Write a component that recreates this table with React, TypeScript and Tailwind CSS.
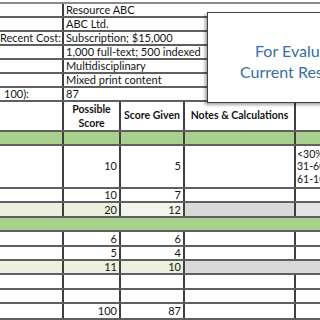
import React from "react";

const H = "border-b-2 border-[#5f5f5f]";
const V = "border-r-2 border-[#3f3f3f]";

function TopRow({ left, right, lpad = "pl-0" }: { left?: string; right?: string; lpad?: string }) {
  return (
    <div className={`grid grid-cols-[64px_1fr] h-[14px] ${H}`}>
      <div className={`${V} ${lpad} leading-[12px] whitespace-nowrap overflow-hidden`}>{left}</div>
      <div className="pl-[2px] leading-[12px] whitespace-nowrap">{right}</div>
    </div>
  );
}

type Cell = { t?: React.ReactNode; bg?: string };

function Row({ h, cells }: { h: string; cells: Cell[] }) {
  return (
    <div className={`grid grid-cols-[64px_57px_64px_111px_1fr] ${h} ${H}`}>
      {cells.map((c, i) => (
        <div
          key={i}
          className={`${i < 4 ? V : ""} ${c.bg ?? ""} pr-[2px] leading-[12px] flex items-center justify-end whitespace-nowrap overflow-hidden`}
        >
          {c.t}
        </div>
      ))}
    </div>
  );
}

export default function App() {
  const lg = "bg-[#ebf1de]";
  const gr = "bg-[#d9d9d9]";
  return (
    <div className="w-[320px] h-[320px] overflow-hidden bg-white relative font-['Lato',sans-serif] text-[11px] text-[#141414]">
      <div className={`h-[4px] border-b-2 border-[#8a8a8a]`} />
      <TopRow right="Resource ABC" />
      <TopRow right="ABC Ltd." />
      <TopRow left="Recent Cost:" lpad="pl-0" right="Subscription; $15,000" />
      <TopRow right="1,000 full-text; 500 indexed" />
      <TopRow right="Multidisciplinary" />
      <TopRow right="Mixed print content" />
      <TopRow left="100):" lpad="pl-[4px]" right="87" />

      {/* header */}
      <div className={`grid grid-cols-[64px_57px_64px_111px_1fr] h-[30px] ${H} font-bold text-[10.5px]`}>
        <div className={V} />
        <div className={`${V} flex flex-col items-center justify-center leading-[14px]`}>
          <span>Possible</span>
          <span>Score</span>
        </div>
        <div className={`${V} flex items-center justify-center whitespace-nowrap`}>Score Given</div>
        <div className={`${V} flex items-center justify-center whitespace-nowrap`}>Notes &amp; Calculations</div>
        <div />
      </div>
      {/* green band with columns */}
      <div className={`grid grid-cols-[64px_57px_64px_111px_1fr] h-[14px] ${H} bg-[#a9d18e]`}>
        <div className={V} />
        <div className={V} />
        <div className={V} />
        <div className={V} />
        <div />
      </div>
      {/* tall row */}
      <div className={`grid grid-cols-[64px_57px_64px_111px_1fr] h-[43px] ${H}`}>
        <div className={V} />
        <div className={`${V} flex items-center justify-end pr-[2px]`}>10</div>
        <div className={`${V} flex items-center justify-end pr-[2px]`}>5</div>
        <div className={V} />
        <div className="flex flex-col justify-center pl-[1px] text-[10.5px] leading-[12.5px] whitespace-nowrap overflow-hidden">
          <span>&lt;30%</span>
          <span>31-60</span>
          <span>61-100</span>
        </div>
      </div>
      <Row h="h-[14px]" cells={[{}, { t: "10" }, { t: "7" }, {}, {}]} />
      <Row h="h-[15px]" cells={[{ bg: lg }, { t: "20", bg: lg }, { t: "12", bg: "bg-[#f2f5ec]" }, { bg: gr }, { bg: "bg-[#e4e4e4]" }]} />
      <div className={`h-[14px] ${H} bg-[#a9d18e]`} />
      <Row h="h-[15px]" cells={[{}, { t: "6" }, { t: "6" }, {}, {}]} />
      <Row h="h-[14px]" cells={[{}, { t: "5" }, { t: "4" }, {}, {}]} />
      <div className={`grid grid-cols-[64px_57px_64px_1fr] h-[14px] ${H}`}>
        <div className={`${V} ${lg}`} />
        <div className={`${V} ${lg} flex items-center justify-end pr-[2px] leading-[12px]`}>11</div>
        <div className={`${V} ${lg} flex items-center justify-end pr-[2px] leading-[12px]`}>10</div>
        <div className={gr} />
      </div>
      <Row h="h-[15px]" cells={[{}, {}, {}, {}, {}]} />
      <Row h="h-[14px]" cells={[{}, {}, {}, {}, {}]} />
      <Row h="h-[16px]" cells={[{}, { t: "100" }, { t: "87" }, {}, {}]} />

      {/* overlay box */}
      <div className="absolute left-[207px] top-[12px] w-[160px] h-[91px] bg-white border-[1.5px] border-[#404040] shadow-[-2px_2px_3px_rgba(0,0,0,0.35)] text-[#3a6ea5] text-[16px] leading-[21px] whitespace-nowrap pt-[27px]">
        <div className="pl-[47px]">For Evaluation</div>
        <div className="pl-[32px]">Current Resource</div>
      </div>
    </div>
  );
}
